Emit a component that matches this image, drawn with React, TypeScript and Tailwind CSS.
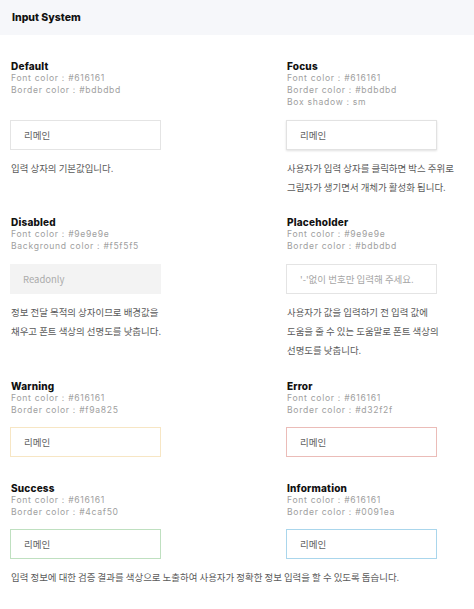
import React from "react";

const latin = "font-['Inter','Noto_Sans_CJK_KR',sans-serif]";
const kr = "font-['Noto_Sans_CJK_KR','Noto_Sans',sans-serif]";

function Head({ title, lines }: { title: string; lines: string[] }) {
  return (
    <div className={`pl-px ${latin}`}>
      <div className="text-[10px] leading-[12px] font-extrabold text-[#111111] tracking-[0.2px]">{title}</div>
      {lines.map((l) => (
        <div key={l} className="text-[8.6px] leading-[12px] text-[#a0a0a0] tracking-[0.7px]">
          {l}
        </div>
      ))}
    </div>
  );
}

function Box({
  text,
  cls,
  textCls = "text-[#616161]",
}: {
  text: string;
  cls: string;
  textCls?: string;
}) {
  return (
    <div className={`w-[151px] h-[30px] flex items-center pl-[13px] ${cls}`}>
      <span className={`${kr} text-[9.5px] ${textCls}`}>{text}</span>
    </div>
  );
}

function Desc({ children }: { children: React.ReactNode }) {
  return (
    <div className={`pl-px ${kr} text-[9.45px] leading-[19px] text-[#5a5a5a] whitespace-nowrap`}>
      {children}
    </div>
  );
}

export default function App() {
  return (
    <div className="w-[474px] h-[609px] bg-white overflow-hidden">
      <div className="h-[35px] bg-[#f6f7fa] flex items-center pl-[12px]">
        <span className={`${latin} text-[10.5px] font-extrabold text-[#111111]`}>Input System</span>
      </div>

      <div className="pl-[10px]">
        {/* Row 1 */}
        <div className="grid grid-cols-[276px_1fr] pt-[25px]">
          <Head title="Default" lines={["Font color : #616161", "Border color : #bdbdbd"]} />
          <Head
            title="Focus"
            lines={["Font color : #616161", "Border color : #bdbdbd", "Box shadow : sm"]}
          />
          <div className="mt-[12px]">
            <Box text="리메인" cls="border border-[#e4e4e4] bg-white" />
          </div>
          <div className="mt-[12px]">
            <Box
              text="리메인"
              cls="border border-[#e2e2e2] bg-white shadow-[0_1px_2px_rgba(0,0,0,0.12)]"
            />
          </div>
          <div className="mt-[9px]">
            <Desc>입력 상자의 기본값입니다.</Desc>
          </div>
          <div className="mt-[9px]">
            <Desc>
              사용자가 입력 상자를 클릭하면 박스 주위로
              <br />
              그림자가 생기면서 개체가 활성화 됩니다.
            </Desc>
          </div>
        </div>

        {/* Row 2 */}
        <div className="grid grid-cols-[276px_1fr] pt-[19px]">
          <Head
            title="Disabled"
            lines={["Font color : #9e9e9e", "Background color : #f5f5f5"]}
          />
          <Head
            title="Placeholder"
            lines={["Font color : #9e9e9e", "Border color : #bdbdbd"]}
          />
          <div className="mt-[12px]">
            <Box text="Readonly" cls="bg-[#f3f3f3]" textCls={`text-[#ababab] ${latin}`} />
          </div>
          <div className="mt-[12px]">
            <Box
              text="'-'없이 번호만 입력해 주세요."
              cls="border border-[#e4e4e4] bg-white"
              textCls="text-[#a6a6a6]"
            />
          </div>
          <div className="mt-[9px]">
            <Desc>
              정보 전달 목적의 상자이므로 배경값을
              <br />
              채우고 폰트 색상의 선명도를 낮춥니다.
            </Desc>
          </div>
          <div className="mt-[9px]">
            <Desc>
              사용자가 값을 입력하기 전 입력 값에
              <br />
              도움을 줄 수 있는 도움말로 폰트 색상의
              <br />
              선명도를 낮춥니다.
            </Desc>
          </div>
        </div>

        {/* Row 3 */}
        <div className="grid grid-cols-[276px_1fr] pt-[20px]">
          <Head title="Warning" lines={["Font color : #616161", "Border color : #f9a825"]} />
          <Head title="Error" lines={["Font color : #616161", "Border color : #d32f2f"]} />
          <div className="mt-[11px]">
            <Box text="리메인" cls="border border-[#f7e6c4] bg-white" />
          </div>
          <div className="mt-[11px]">
            <Box text="리메인" cls="border border-[#ebbcb8] bg-white" />
          </div>
        </div>

        {/* Row 4 */}
        <div className="grid grid-cols-[276px_1fr] pt-[25px]">
          <Head title="Success" lines={["Font color : #616161", "Border color : #4caf50"]} />
          <Head title="Information" lines={["Font color : #616161", "Border color : #0091ea"]} />
          <div className="mt-[11px]">
            <Box text="리메인" cls="border border-[#bfe0c0] bg-white" />
          </div>
          <div className="mt-[11px]">
            <Box text="리메인" cls="border border-[#aad6ec] bg-white" />
          </div>
        </div>

        <div className="mt-[9px]">
          <Desc>
            입력 정보에 대한 검증 결과를 색상으로 노출하여 사용자가 정확한 정보 입력을 할 수 있도록 돕습니다.
          </Desc>
        </div>
      </div>
    </div>
  );
}
